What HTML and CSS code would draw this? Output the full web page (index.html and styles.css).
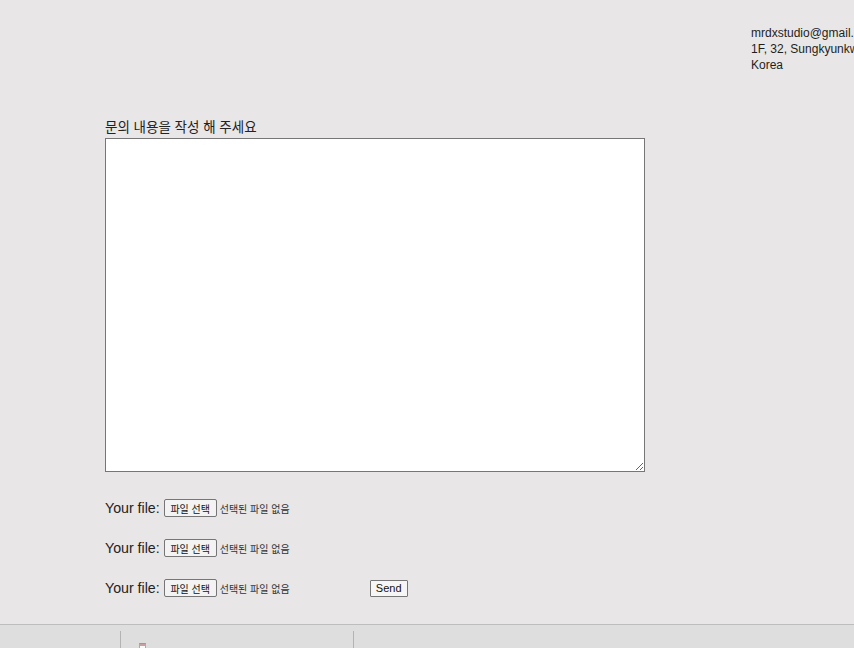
FILE: index.html
```html
<!DOCTYPE html>
<html lang="ko">
<head>
    <meta charset="UTF-8">
    <title>Contact - MRDX Studio</title>
    <link rel="stylesheet" href="styles.css">
</head>
<body>
    <header class="contact-info">
        <p>mrdxstudio@gmail.com</p>
        <p>1F, 32, Sungkyunkwan-ro, Jongno-gu, Seoul</p>
        <p>Korea</p>
    </header>

    <form class="inquiry-form" onsubmit="return false;">
        <label class="inquiry-label" for="message">문의 내용을 작성 해 주세요</label>
        <textarea id="message" class="inquiry-text"></textarea>

        <div class="file-row">
            <span class="file-label">Your file:</span>
            <button type="button" class="file-btn">파일 선택</button>
            <span class="file-status">선택된 파일 없음</span>
        </div>
        <div class="file-row">
            <span class="file-label">Your file:</span>
            <button type="button" class="file-btn">파일 선택</button>
            <span class="file-status">선택된 파일 없음</span>
        </div>
        <div class="file-row">
            <span class="file-label">Your file:</span>
            <button type="button" class="file-btn">파일 선택</button>
            <span class="file-status">선택된 파일 없음</span>
            <button type="submit" class="send-btn">Send</button>
        </div>
    </form>

    <footer class="footer">
        <div class="footer-col col-first">Home About</div>
        <div class="footer-col col-second">
            <span class="doc-icon"></span>
            <span>mrdx studio portfolio</span>
        </div>
    </footer>
</body>
</html>
```

FILE: styles.css
```css
* {
    margin: 0;
    padding: 0;
    box-sizing: border-box;
}

html, body {
    height: 100%;
}

body {
    background: #e8e6e6;
    color: #222;
    font-family: 'Liberation Sans', Arial, 'Noto Sans CJK KR', sans-serif;
    overflow: hidden;
}

.contact-info {
    padding: 25px 0 0 751px;
    font-size: 12px;
    line-height: 16px;
    white-space: nowrap;
    color: #1e1e1e;
}

.inquiry-form {
    margin: 47px 0 0 105px;
    width: 540px;
}

.inquiry-label {
    display: block;
    font-family: 'Liberation Sans', 'Noto Sans CJK KR', sans-serif;
    font-size: 13.5px;
    line-height: 16px;
    margin-bottom: 2px;
    color: #222;
}

.inquiry-text {
    display: block;
    width: 540px;
    height: 334px;
    border: 1px solid #767676;
    background: #fff;
    resize: vertical;
    margin-bottom: 16px;
}

.file-row {
    display: flex;
    align-items: center;
    height: 40px;
}

.file-label {
    font-size: 14.2px;
    margin-right: 4px;
    color: #222;
}

.file-btn,
.send-btn {
    font-family: 'Liberation Sans', 'Noto Sans CJK KR', sans-serif;
    font-size: 10px;
    height: 18px;
    border: 1px solid #767676;
    border-radius: 2px;
    background: #f3f3f3;
    color: #111;
    padding: 0 5px;
}

.file-btn {
    width: 53px;
}

.file-status {
    font-family: 'Noto Sans CJK KR', sans-serif;
    font-size: 10px;
    margin-left: 3px;
    color: #333;
}

.send-btn {
    font-size: 11px;
    width: 38px;
    height: 17px;
    margin-left: 80px;
    border-radius: 1px;
    background: #f6f6f6;
}

.footer {
    margin-top: 16px;
    border-top: 1px solid #bdbdbd;
    background: #dedede;
    height: 40px;
    display: flex;
    padding-top: 6px;
}

.footer-col {
    font-size: 11px;
    color: #555;
    padding-top: 15px;
    white-space: nowrap;
    overflow: hidden;
}

.col-first {
    width: 121px;
    padding-left: 12px;
    border-right: 1px solid #b3b3b3;
}

.col-second {
    width: 233px;
    padding-left: 18px;
    border-right: 1px solid #b3b3b3;
    display: flex;
    gap: 8px;
    align-items: flex-start;
}

.doc-icon {
    display: inline-block;
    width: 7px;
    height: 9px;
    margin-top: -3px;
    background: #fafafa;
    border: 1px solid #aaa;
    border-top-color: #999;
    box-shadow: inset 0 2px 0 #c9a0a0;
}
```
